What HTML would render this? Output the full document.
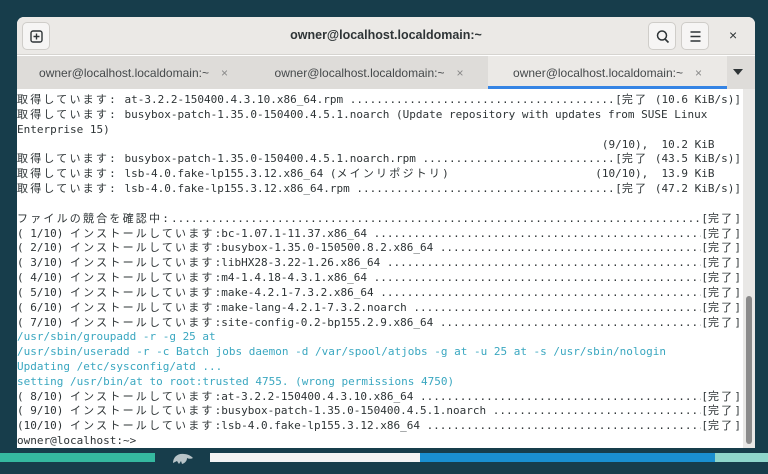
<!DOCTYPE html>
<html><head><meta charset="utf-8"><style>
*{margin:0;padding:0;box-sizing:border-box}
body{width:768px;height:474px;background:#173d4b;position:relative;overflow:hidden;font-family:"Liberation Sans","DejaVu Sans",sans-serif}
.win{position:absolute;left:17px;top:17px;width:738px;height:431px;background:#fff;border-radius:7px 7px 0 0;overflow:hidden}
.hdr{position:absolute;left:0;top:0;width:738px;height:38px;background:#ebe9e6;border-bottom:1px solid #d6d4d0}
.title{position:absolute;left:0;right:0;top:11px;text-align:center;font-size:12.5px;font-weight:bold;color:#2e3436}
.btn{position:absolute;top:5px;width:28px;height:28px;background:#f6f5f4;border:1px solid #cfcdc9;border-radius:5px}
.tabs{position:absolute;left:0;top:39px;width:738px;height:33px;background:#dedcd9}
.tab{position:absolute;top:0;height:33px;font-size:12px;color:#45494b;padding-top:10px}
.tab .x{color:#888;margin-left:12px}
.term{position:absolute;left:0;top:72px;width:738px;height:359px;background:#fff}
.ln{position:absolute;left:0;width:724px;height:15px;display:flex;white-space:pre;font-family:"DejaVu Sans Mono","Noto Sans CJK JP",monospace;font-size:11px;line-height:15px;color:#2e3436}
.ln .d{flex:1;overflow:hidden}
.j{letter-spacing:2.2px}
.c{color:#3aa7c0}
.sb{position:absolute;left:726px;top:0;width:12px;height:359px;background:#e9e8e6}
.th{position:absolute;left:729px;top:207px;width:6px;height:148px;background:#8b8b8b;border-radius:3px}
</style></head><body>
<div class="win">
 <div class="hdr">
  <div class="btn" style="left:5px"><svg width="28" height="28"><rect x="8" y="8" width="11" height="11" rx="2" fill="none" stroke="#2e3436" stroke-width="1.4"/><path d="M13.5 10.5v6M10.5 13.5h6" stroke="#2e3436" stroke-width="1.4"/></svg></div>
  <div class="title">owner@localhost.localdomain:~</div>
  <div class="btn" style="left:631px"><svg width="28" height="28"><circle cx="13" cy="12.5" r="4.5" fill="none" stroke="#2e3436" stroke-width="1.5"/><path d="M16 16l3.5 3.5" stroke="#2e3436" stroke-width="1.6"/></svg></div>
  <div class="btn" style="left:664px"><svg width="28" height="28"><path d="M8.5 9h10M8.5 13.5h10M8.5 18h10" stroke="#2e3436" stroke-width="1.5"/></svg></div>
  <div style="position:absolute;left:712px;top:10px;font-size:14px;color:#2e3436">×</div>
 </div>
 <div class="tabs">
  <div class="tab" style="left:0;width:233px;text-align:center">owner@localhost.localdomain:~<span class="x">×</span></div>
  <div class="tab" style="left:233px;width:238px;text-align:center">owner@localhost.localdomain:~<span class="x">×</span></div>
  <div class="tab" style="left:471px;width:239px;text-align:center;background:#ebe9e6;border-bottom:3px solid #3584e4">owner@localhost.localdomain:~<span class="x">×</span></div>
  <div style="position:absolute;left:716px;top:13px;width:0;height:0;border-left:5px solid transparent;border-right:5px solid transparent;border-top:6px solid #2e3436"></div>
 </div>
 <div class="term">
  <div class="sb"></div><div class="th"></div>
  <div class="ln" style="top:3px"><span class="j">取得しています:</span> at-3.2.2-150400.4.3.10.x86_64.rpm <span class="d">........................................................................................</span><span>[<span class="j">完了</span> (10.6 KiB/s)]</span></div>
  <div class="ln" style="top:18px"><span class="j">取得しています:</span> busybox-patch-1.35.0-150400.4.5.1.noarch (Update repository with updates from SUSE Linux</div>
  <div class="ln" style="top:33px">Enterprise 15)</div>
  <div class="ln" style="top:48px"><span class="d"></span>(9/10),  10.2 KiB    </div>
  <div class="ln" style="top:62px"><span class="j">取得しています:</span> busybox-patch-1.35.0-150400.4.5.1.noarch.rpm <span class="d">.........................................................</span><span>[<span class="j">完了</span> (43.5 KiB/s)]</span></div>
  <div class="ln" style="top:77px"><span class="j">取得しています:</span> lsb-4.0.fake-lp155.3.12.x86_64 (<span class="j">メインリポジトリ</span>)<span class="d"></span>(10/10),  13.9 KiB    </div>
  <div class="ln" style="top:92px"><span class="j">取得しています:</span> lsb-4.0.fake-lp155.3.12.x86_64.rpm <span class="d">...........................................................................</span><span>[<span class="j">完了</span> (47.2 KiB/s)]</span></div>
  <div class="ln" style="top:122px"><span class="j">ファイルの競合を確認中:</span> <span class="d">.........................................................................................................</span><span>[<span class="j">完了</span>]</span></div>
  <div class="ln" style="top:137px">( 1/10) <span class="j">インストールしています</span>:bc-1.07.1-11.37.x86_64 <span class="d">.........................................................................................</span><span>[<span class="j">完了</span>]</span></div>
  <div class="ln" style="top:151px">( 2/10) <span class="j">インストールしています</span>:busybox-1.35.0-150500.8.2.x86_64 <span class="d">.........................................................................................</span><span>[<span class="j">完了</span>]</span></div>
  <div class="ln" style="top:166px">( 3/10) <span class="j">インストールしています</span>:libHX28-3.22-1.26.x86_64 <span class="d">.........................................................................................</span><span>[<span class="j">完了</span>]</span></div>
  <div class="ln" style="top:181px">( 4/10) <span class="j">インストールしています</span>:m4-1.4.18-4.3.1.x86_64 <span class="d">.........................................................................................</span><span>[<span class="j">完了</span>]</span></div>
  <div class="ln" style="top:196px">( 5/10) <span class="j">インストールしています</span>:make-4.2.1-7.3.2.x86_64 <span class="d">.........................................................................................</span><span>[<span class="j">完了</span>]</span></div>
  <div class="ln" style="top:211px">( 6/10) <span class="j">インストールしています</span>:make-lang-4.2.1-7.3.2.noarch <span class="d">.........................................................................................</span><span>[<span class="j">完了</span>]</span></div>
  <div class="ln" style="top:226px">( 7/10) <span class="j">インストールしています</span>:site-config-0.2-bp155.2.9.x86_64 <span class="d">.........................................................................................</span><span>[<span class="j">完了</span>]</span></div>
  <div class="ln c" style="top:240px">/usr/sbin/groupadd -r -g 25 at</div>
  <div class="ln c" style="top:255px">/usr/sbin/useradd -r -c Batch jobs daemon -d /var/spool/atjobs -g at -u 25 at -s /usr/sbin/nologin</div>
  <div class="ln c" style="top:270px">Updating /etc/sysconfig/atd ...</div>
  <div class="ln c" style="top:285px">setting /usr/bin/at to root:trusted 4755. (wrong permissions 4750)</div>
  <div class="ln" style="top:300px">( 8/10) <span class="j">インストールしています</span>:at-3.2.2-150400.4.3.10.x86_64 <span class="d">.........................................................................................</span><span>[<span class="j">完了</span>]</span></div>
  <div class="ln" style="top:314px">( 9/10) <span class="j">インストールしています</span>:busybox-patch-1.35.0-150400.4.5.1.noarch <span class="d">.........................................................................................</span><span>[<span class="j">完了</span>]</span></div>
  <div class="ln" style="top:329px">(10/10) <span class="j">インストールしています</span>:lsb-4.0.fake-lp155.3.12.x86_64 <span class="d">.........................................................................................</span><span>[<span class="j">完了</span>]</span></div>
  <div class="ln" style="top:344px">owner@localhost:~&gt;</div>
 </div>
</div>
<div style="position:absolute;left:0;top:453px;width:155px;height:9px;background:#35b9a0"></div>
<svg style="position:absolute;left:170px;top:450px" width="26" height="16"><path d="M3 13c0-6 5-10 11-9c4 0 7 2 9 4c-2 1-4 1-6 0c0 3-2 5-5 6l-1-3l-2 3l-2-3z" fill="#b8c4c8"/></svg>
<div style="position:absolute;left:210px;top:453px;width:210px;height:9px;background:#f3f3f3"></div>
<div style="position:absolute;left:420px;top:453px;width:295px;height:9px;background:#1a8fd0"></div>
<div style="position:absolute;left:715px;top:453px;width:53px;height:9px;background:#8fd6cb"></div>
</body></html>
